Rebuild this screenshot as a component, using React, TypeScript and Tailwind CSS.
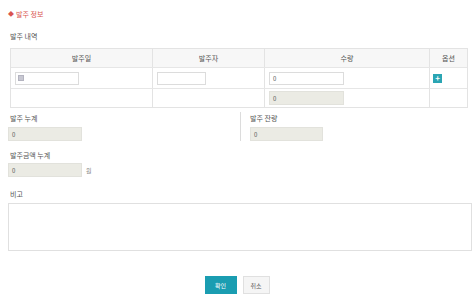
import React from 'react';

const FONT = { fontFamily: '"Noto Sans CJK KR", "Noto Sans", sans-serif' };

const ReadOnlyInput = ({ className = '' }: { className?: string }) => (
  <div className={`h-[14px] bg-[#ebebe4] border border-[#e2e2dc] flex items-center pl-[3px] text-[6px] text-[#555] ${className}`}>
    0
  </div>
);

export default function App() {
  return (
    <div className="w-[474px] h-[300px] bg-white text-[#444] pl-[8px] pr-[2px] pt-[9px]" style={FONT}>
      {/* section title */}
      <div className="flex items-center gap-[2px] text-[7px] text-[#d9534f] h-[10px]">
        <span className="text-[6px] leading-none">◆</span>
        <span>발주 정보</span>
      </div>

      <div className="mt-[14px] pl-[2px] text-[7px] text-[#555] leading-none">발주 내역</div>

      {/* order table */}
      <div className="mt-[8px] ml-[2px] w-[458px] border border-[#e3e3e3] text-[6px]">
        <div className="grid grid-cols-[142px_112px_165px_1fr] h-[19px] bg-[#f7f7f7] border-b border-[#e6e6e6] text-[#555] text-[7px]">
          <div className="flex items-center justify-center border-r border-[#e3e3e3]">발주일</div>
          <div className="flex items-center justify-center border-r border-[#e3e3e3]">발주자</div>
          <div className="flex items-center justify-center border-r border-[#e3e3e3]">수량</div>
          <div className="flex items-center justify-center">옵션</div>
        </div>
        <div className="grid grid-cols-[142px_112px_165px_1fr] h-[21px] border-b border-[#e6e6e6]">
          <div className="flex items-center pl-[4px] border-r border-[#e3e3e3]">
            <div className="w-[64px] h-[13px] border border-[#dcdcdc] bg-white flex items-center pl-[2px]">
              <div className="w-[6px] h-[6px] bg-[#c8c8d2] border border-[#b4b4c0]" />
            </div>
          </div>
          <div className="flex items-center pl-[4px] border-r border-[#e3e3e3]">
            <div className="w-[49px] h-[13px] border border-[#dcdcdc] bg-white" />
          </div>
          <div className="flex items-center pl-[4px] border-r border-[#e3e3e3]">
            <div className="w-[75px] h-[13px] border border-[#dcdcdc] bg-white flex items-center pl-[3px] text-[#555]">0</div>
          </div>
          <div className="flex items-center pl-[3px]">
            <div className="w-[9px] h-[9px] bg-[#2aa5b3] text-white flex items-center justify-center text-[8px] font-bold leading-none">+</div>
          </div>
        </div>
        <div className="grid grid-cols-[142px_112px_165px_1fr] h-[18px]">
          <div className="border-r border-[#e3e3e3]" />
          <div className="border-r border-[#e3e3e3]" />
          <div className="flex items-center pl-[4px] border-r border-[#e3e3e3]">
            <ReadOnlyInput className="w-[75px]" />
          </div>
          <div />
        </div>
      </div>

      {/* totals */}
      <div className="mt-[4px] flex">
        <div className="w-[232px] pt-[3px]">
          <div className="pl-[2px] text-[7px] text-[#555] leading-none">발주 누계</div>
          <ReadOnlyInput className="mt-[5px] w-[74px]" />
        </div>
        <div className="border-l border-[#dcdcdc] pl-[9px] pt-[3px] h-[29px]">
          <div className="text-[7px] text-[#555] leading-none">발주 잔량</div>
          <ReadOnlyInput className="mt-[5px] w-[73px]" />
        </div>
      </div>

      <div className="mt-[11px] pl-[2px] text-[7px] text-[#555] leading-none">발주금액 누계</div>
      <div className="mt-[4px] flex items-center gap-[4px]">
        <ReadOnlyInput className="w-[74px]" />
        <span className="text-[6px] text-[#888]">원</span>
      </div>

      <div className="mt-[14px] pl-[2px] text-[7px] text-[#555] leading-none">비고</div>
      <div className="mt-[5px] w-[464px] h-[48px] border border-[#e0e0e0] bg-white" />

      {/* buttons */}
      <div className="mt-[25px] flex justify-center gap-[6px] pr-[6px]">
        <button className="w-[32px] h-[18px] bg-[#1a9db1] text-white text-[6px] flex items-center justify-center">확인</button>
        <button className="w-[27px] h-[18px] bg-[#f5f5f5] border border-[#e0e0e0] text-[#555] text-[6px] flex items-center justify-center">취소</button>
      </div>
    </div>
  );
}
